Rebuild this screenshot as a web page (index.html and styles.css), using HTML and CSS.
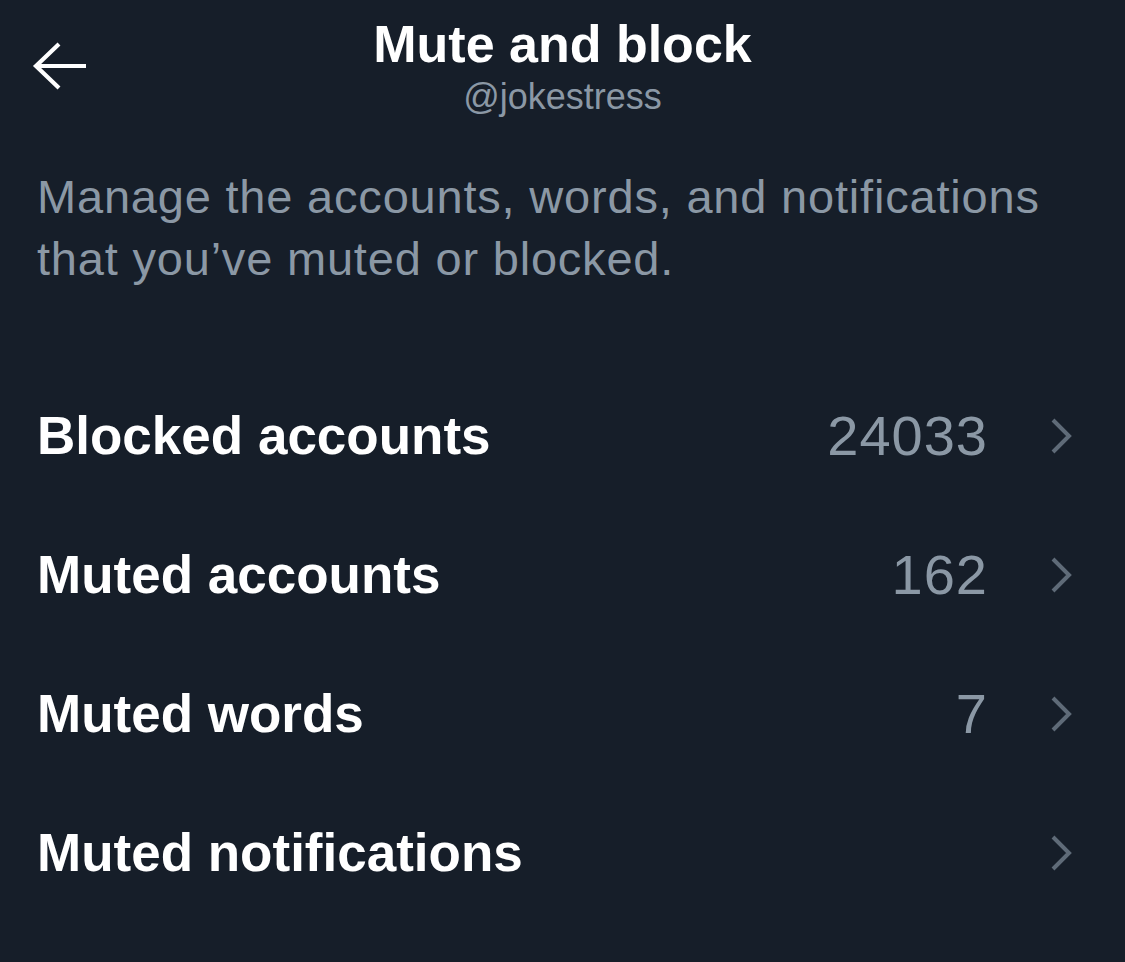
FILE: index.html
```html
<!DOCTYPE html>
<html>
<head>
<meta charset="utf-8">
<link rel="stylesheet" href="styles.css">
</head>
<body>
<div class="page">
  <header class="topbar">
    <div class="back">
      <svg width="56" height="48" viewBox="0 0 56 48"><path d="M54 24H5M27 2L4 24l23 22" fill="none" stroke="#ffffff" stroke-width="4.2" stroke-linecap="butt" stroke-linejoin="miter"/></svg>
    </div>
    <div class="titles">
      <div class="title">Mute and block</div>
      <div class="handle">@jokestress</div>
    </div>
    <div></div>
  </header>
  <p class="desc">Manage the accounts, words, and notifications that you’ve muted or blocked.</p>
  <ul class="list">
    <li class="row"><span class="label">Blocked accounts</span><span class="count">24033</span><span class="chev"><svg width="26" height="40" viewBox="0 0 26 40"><path d="M4 4l16 16L4 36" fill="none" stroke="#5f6b78" stroke-width="4"/></svg></span></li>
    <li class="row"><span class="label">Muted accounts</span><span class="count">162</span><span class="chev"><svg width="26" height="40" viewBox="0 0 26 40"><path d="M4 4l16 16L4 36" fill="none" stroke="#5f6b78" stroke-width="4"/></svg></span></li>
    <li class="row"><span class="label">Muted words</span><span class="count">7</span><span class="chev"><svg width="26" height="40" viewBox="0 0 26 40"><path d="M4 4l16 16L4 36" fill="none" stroke="#5f6b78" stroke-width="4"/></svg></span></li>
    <li class="row"><span class="label">Muted notifications</span><span class="count"></span><span class="chev"><svg width="26" height="40" viewBox="0 0 26 40"><path d="M4 4l16 16L4 36" fill="none" stroke="#5f6b78" stroke-width="4"/></svg></span></li>
  </ul>
</div>
</body>
</html>
```

FILE: styles.css
```css
html, body {
  margin: 0;
  padding: 0;
  background: #161e29;
}
body {
  font-family: "Liberation Sans", Arial, sans-serif;
  color: #ffffff;
}
.page {
  width: 1125px;
  height: 962px;
  overflow: hidden;
}
.topbar {
  display: grid;
  grid-template-columns: 1fr auto 1fr;
  align-items: start;
  padding-top: 16px;
  height: 114px;
}
.back {
  padding-left: 32px;
  padding-top: 26px;
}
.back svg { display: block; }
.titles {
  text-align: center;
}
.title {
  font-size: 52px;
  font-weight: 700;
  line-height: 56px;
}
.handle {
  margin-top: 5px;
  font-size: 36px;
  line-height: 40px;
  color: #8b98a5;
}
.desc {
  margin: 36px 0 0;
  padding: 0 37px;
  font-size: 47px;
  letter-spacing: 0.8px;
  line-height: 62px;
  color: #8b98a5;
}
.list {
  list-style: none;
  margin: 76px 0 0;
  padding: 0;
}
.row {
  display: flex;
  align-items: center;
  height: 139px;
  padding: 0 50px 0 37px;
}
.label {
  flex: 1;
  font-size: 53px;
  font-weight: 700;
}
.count {
  font-size: 56px;
  letter-spacing: 1px;
  color: #8b98a5;
  margin-right: 61px;
}
.chev svg { display: block; }
```
